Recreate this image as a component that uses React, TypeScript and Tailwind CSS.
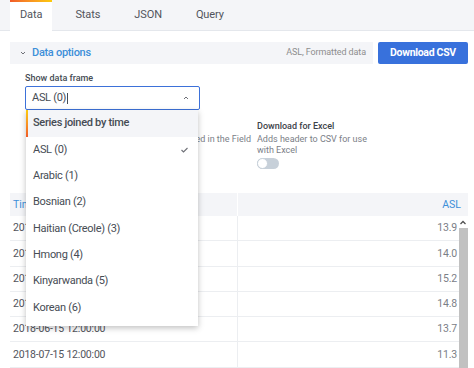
import React from "react";

const tabs = ["Data", "Stats", "JSON", "Query"];

const frames = [
  "ASL (0)",
  "Arabic (1)",
  "Bosnian (2)",
  "Haitian (Creole) (3)",
  "Hmong (4)",
  "Kinyarwanda (5)",
  "Korean (6)",
];

const rows = [
  { time: "2018-02-15 12:00:00", value: "13.9" },
  { time: "2018-03-15 12:00:00", value: "14.0" },
  { time: "2018-04-15 12:00:00", value: "15.2" },
  { time: "2018-05-15 12:00:00", value: "14.8" },
  { time: "2018-06-15 12:00:00", value: "13.7" },
  { time: "2018-07-15 12:00:00", value: "11.3" },
];

function Switch() {
  return (
    <div className="w-[22px] h-[11px] rounded-full bg-[#c7d0d9] relative">
      <div className="absolute left-0 top-0 w-[11px] h-[11px] rounded-full bg-white border border-[#c7d0d9]" />
    </div>
  );
}

export default function App() {
  return (
    <div
      className="w-[474px] h-[368px] overflow-hidden bg-white relative text-[#464c54]"
      style={{ fontFamily: "Roboto, 'Liberation Sans', sans-serif" }}
    >
      {/* tabs */}
      <div className="h-[31px] bg-[#f4f5f8] border-b border-[#e4e7ec] flex pl-[10px] gap-[12px]">
        {tabs.map((t, i) => (
          <div
            key={t}
            className={
              i === 0
                ? "relative h-[31px] px-[10px] bg-white flex items-center text-[11px] tracking-[-0.1px] text-[#52545c]"
                : "h-[31px] px-[11px] flex items-center text-[11px] tracking-[-0.1px] text-[#52545c]"
            }
          >
            {i === 0 && (
              <div className="absolute left-0 right-0 top-0 h-[2px] bg-gradient-to-r from-[#f05a28] to-[#fbca0a]" />
            )}
            {t}
          </div>
        ))}
      </div>

      <div className="pl-[10px] pr-[6px] pt-[11px]">
        {/* options header */}
        <div className="flex h-[22px] gap-[5px]">
          <div className="flex-1 bg-[#f4f5f8] flex items-center pl-[9px] pr-[7px]">
            <svg width="8" height="8" viewBox="0 0 8 8" className="mr-[5px]">
              <path d="M2 3 L4 5 L6 3" fill="none" stroke="#6e7077" strokeWidth="1" />
            </svg>
            <span className="text-[11px] tracking-[-0.3px] font-medium text-[#3d8fd9]">Data options</span>
            <span className="ml-auto text-[9px] tracking-[-0.1px] text-[#8e8e8e]">ASL, Formatted data</span>
          </div>
          <div className="w-[90px] bg-[#3871dc] rounded-[2px] flex items-center justify-center text-white text-[10.5px] tracking-[-0.3px] font-bold">
            Download CSV
          </div>
        </div>

        {/* options body */}
        <div className="pl-[15px] pt-[9px] h-[129px]">
          <div className="text-[9px] font-medium text-[#464c54] leading-[11px]">Show data frame</div>
          <div className="mt-[2px] w-[175px]">
            <div className="h-[24px] border border-[#3d71d9] rounded-[2px] flex items-center pl-[6px] pr-[9px] text-[11px] tracking-[-0.3px]">
              <span>ASL (0)</span>
              <span className="w-px h-[11px] bg-[#464c54] ml-[1px]" />
              <svg width="8" height="8" viewBox="0 0 8 8" className="ml-auto">
                <path d="M2 5 L4 3 L6 5" fill="none" stroke="#6e7077" strokeWidth="1" />
              </svg>
            </div>
          </div>

          <div className="flex mt-[11px]">
            <div className="w-[232px] pl-[4px] pr-[17px]">
              <div className="text-[9px] font-medium leading-[11px]">Formatted data</div>
              <div className="text-[9px] text-[#7b8087] leading-[11px] mt-[2px] text-right whitespace-nowrap">
                Table data is formatted with options defined in the Field
              </div>
              <div className="text-[9px] text-[#7b8087] leading-[11px]">and Override tabs.</div>
              <div className="mt-[2px]">
                <Switch />
              </div>
            </div>
            <div className="w-[115px]">
              <div className="text-[9px] font-medium text-[#3d4249] leading-[11px]">Download for Excel</div>
              <div className="text-[9px] text-[#7b8087] leading-[11px] mt-[2px]">
                Adds header to CSV for use
                <br />
                with Excel
              </div>
              <div className="mt-[2px]">
                <Switch />
              </div>
            </div>
          </div>
        </div>

        {/* table */}
        <div>
          <div className="h-[23px] bg-[#f4f5f8] flex text-[10.5px] text-[#3d8fd9]">
            <div className="w-[228px] pl-[3px] flex items-center border-r border-white">Time</div>
            <div className="flex-1 flex items-center justify-end pr-[7px]">ASL</div>
          </div>
          <div className="relative">
            {rows.map((r) => (
              <div key={r.time} className="h-[25.3px] flex border-b border-[#eceef1] text-[10.5px] tracking-[-0.2px]">
                <div className="w-[228px] pl-[3px] flex items-center border-r border-[#eceef1] text-[#52545c]">
                  {r.time}
                </div>
                <div className="flex-1 flex items-center justify-end pr-[11px] text-[#7b8087]">{r.value}</div>
              </div>
            ))}
            {/* scrollbar */}
            <div className="absolute right-0 top-0 bottom-0 w-[10px] flex flex-col items-center">
              <svg width="8" height="8" viewBox="0 0 8 8" className="mt-[3px]">
                <path d="M1.5 5 L4 2.5 L6.5 5" fill="none" stroke="#505050" strokeWidth="1.3" />
              </svg>
              <div className="w-[9px] flex-1 bg-[#c1c1c1] mt-[1px]" />
            </div>
          </div>
        </div>
      </div>

      {/* dropdown menu */}
      <div className="absolute left-[26px] top-[110px] w-[172px] bg-white shadow-[0_2px_6px_rgba(0,0,0,0.25)] pb-[5px]">
        <div className="relative h-[27px] bg-[#f4f5f8] flex items-center pl-[7px] text-[11px] tracking-[-0.3px] font-medium">
          <div className="absolute left-0 top-0 bottom-0 w-[2px] bg-gradient-to-b from-[#fbca0a] to-[#f05a28]" />
          Series joined by time
        </div>
        {frames.map((f, i) => (
          <div key={f} className="h-[26.3px] flex items-center pl-[7px] pr-[9px] text-[11px] tracking-[-0.3px]">
            <span>{f}</span>
            {i === 0 && (
              <svg width="9" height="8" viewBox="0 0 9 8" className="ml-auto">
                <path d="M1.5 4 L3.5 6 L7.5 2" fill="none" stroke="#6e7077" strokeWidth="1.1" />
              </svg>
            )}
          </div>
        ))}
      </div>
    </div>
  );
}
